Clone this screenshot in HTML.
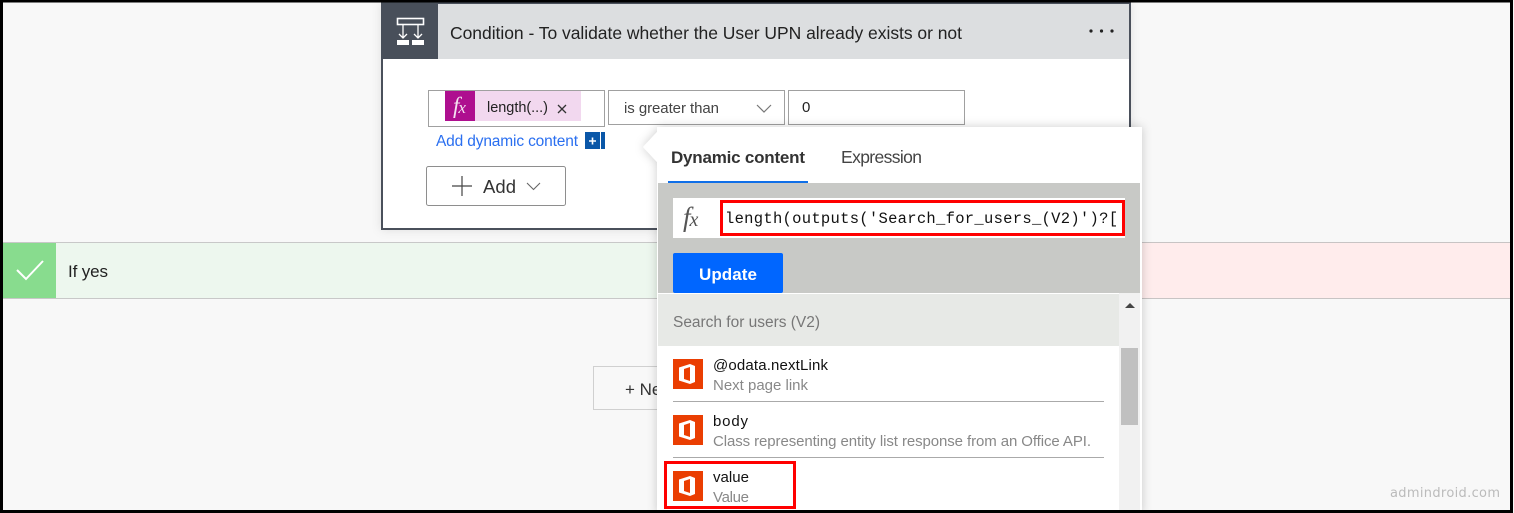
<!DOCTYPE html>
<html><head><meta charset="utf-8"><style>
html,body{margin:0;padding:0;background:#f8f8f8;width:1514px;height:513px;overflow:hidden}
svg{display:block}
text{font-family:"Liberation Sans",sans-serif;white-space:pre}
</style></head><body>
<svg width="1514" height="513" viewBox="0 0 1514 513" xmlns="http://www.w3.org/2000/svg">
<defs>
<filter id="s" x="-10%" y="-10%" width="120%" height="120%"><feDropShadow dx="0" dy="0" stdDeviation="5" flood-color="#000" flood-opacity=".2"/></filter>
<filter id="c" x="-5%" y="-10%" width="110%" height="120%"><feDropShadow dx="0" dy="0" stdDeviation="5" flood-color="#000" flood-opacity=".1"/></filter>
<symbol id="o" viewBox="0 0 30 30" width="30" height="30"><rect width="30" height="30" fill="#ea3e02"/><path fill="#fff" fill-rule="evenodd" d="M17 5L22 7V23L17 25L6 21.500V8.500ZM17 8L11 10V20L17 22Z"/></symbol>
</defs>
<rect width="1514" height="513" fill="#f8f8f8"/>

<!-- branch bars -->
<rect x="3" y="242" width="660" height="56" fill="#edf7ee"/>
<rect x="1138" y="242" width="373" height="56" fill="#ffecec"/>
<rect x="3" y="242" width="660" height="1" fill="#c8c8c8"/><rect x="3" y="298" width="660" height="1" fill="#c8c8c8"/>
<rect x="1138" y="242" width="373" height="1" fill="#c8c4c4"/><rect x="1138" y="298" width="373" height="1" fill="#c8c4c4"/>
<rect x="3" y="243" width="53" height="55" fill="#88dc8e"/>
<path d="M17 270L26 279L43 261" fill="none" stroke="#fff" stroke-width="2"/>
<text x="68" y="277" font-size="17" fill="#222" textLength="40" lengthAdjust="spacing">If yes</text>

<!-- new step -->
<rect x="593.500" y="366.500" width="80" height="43" fill="#f8f8f8" stroke="#d0d0d0"/>
<text x="625" y="395" font-size="17" fill="#333">+ New</text>

<!-- condition card -->
<g filter="url(#c)"><rect x="381" y="2" width="750" height="228" fill="#fff"/></g>
<rect x="382" y="3" width="748" height="226" fill="#fff" stroke="#4a505b" stroke-width="2"/>
<rect x="383" y="4" width="746" height="55" fill="#dcdee0"/>
<rect x="381" y="2" width="57" height="57" fill="#484f5a"/>
<rect x="397.500" y="18.500" width="26" height="6" fill="none" stroke="#fff" stroke-width="1.600"/>
<path d="M403 25V38M399 34L403 38L407 34M418 25V38M414 34L418 38L422 34" fill="none" stroke="#fff" stroke-width="1.300"/>
<rect x="397" y="40" width="12" height="5" fill="#fff"/><rect x="412" y="40" width="12" height="5" fill="#fff"/>
<text x="450" y="39" font-size="17.500" fill="#222" textLength="512" lengthAdjust="spacing">Condition - To validate whether the User UPN already exists or not</text>
<circle cx="1091" cy="31" r="1.600" fill="#222"/><circle cx="1101.500" cy="31" r="1.600" fill="#222"/><circle cx="1112" cy="31" r="1.600" fill="#222"/>

<rect x="428.500" y="90.500" width="176" height="36" fill="#fff" stroke="#a0a0a0"/>
<rect x="445" y="91" width="30" height="30" fill="#ae0f8f"/>
<rect x="475" y="91" width="106" height="30" fill="#f2d8ef"/>
<text x="453" y="113" font-size="23" fill="#f4e0f0" font-style="italic" style="font-family:'Liberation Serif',serif">f<tspan font-size="17" dx="-1">x</tspan></text>
<text x="487" y="112" font-size="14.500" fill="#222" textLength="61" lengthAdjust="spacing">length(...)</text>
<path d="M558 105L566 113M566 105L558 113" stroke="#333" stroke-width="1.300"/>

<rect x="608.500" y="90.500" width="176" height="34" fill="#fff" stroke="#a0a0a0"/>
<text x="624" y="113" font-size="15" fill="#444" textLength="95" lengthAdjust="spacing">is greater than</text>
<path d="M757 105L764 112L771 105" fill="none" stroke="#777" stroke-width="1.200"/>
<rect x="788.500" y="90.500" width="176" height="34" fill="#fff" stroke="#a0a0a0"/>
<text x="802" y="112" font-size="15" fill="#222">0</text>

<text x="436" y="146" font-size="15.500" fill="#2a6ff0" textLength="142" lengthAdjust="spacing">Add dynamic content</text>
<rect x="585" y="132" width="15" height="17" fill="#0a57a8"/><rect x="601" y="132" width="4" height="17" fill="#0a57a8"/>
<path d="M589 141H596M592.500 137.500V144.500" stroke="#fff" stroke-width="1.600"/>

<rect x="426.500" y="166.500" width="139" height="39" rx="2" fill="#fff" stroke="#8e8e8e"/>
<path d="M452 186H472M462 176V196" stroke="#444" stroke-width="1.200"/>
<text x="483" y="193" font-size="18.500" fill="#333" textLength="33" lengthAdjust="spacing">Add</text>
<path d="M527 183L533.500 189.500L540 183" fill="none" stroke="#666" stroke-width="1.100"/>

<!-- popup -->
<g filter="url(#s)"><path d="M657 127H1142V513H657V162L643 147L657 132Z" fill="#fff"/></g>
<text x="671" y="163" font-size="17" font-weight="bold" fill="#333" textLength="134" lengthAdjust="spacing">Dynamic content</text>
<text x="841" y="163" font-size="17.500" fill="#444" textLength="81" lengthAdjust="spacing">Expression</text>
<rect x="668" y="181" width="140" height="2" fill="#0f6fe8"/>
<rect x="658" y="183" width="482" height="110" fill="#c8c9c6"/>
<rect x="673" y="198" width="452" height="40" fill="#fff"/>
<text x="683" y="226" font-size="27" font-style="italic" fill="#555" style="font-family:'Liberation Serif',serif">f<tspan font-size="20" dx="-1">x</tspan></text>
<rect x="721.500" y="201.500" width="402" height="33" fill="#fff" stroke="#f00" stroke-width="3"/>
<text x="725" y="223" font-size="15.500" fill="#111" style="font-family:'Liberation Mono',monospace" textLength="393" lengthAdjust="spacing">length(outputs('Search_for_users_(V2)')?[</text>
<rect x="673" y="253" width="110" height="40" rx="2" fill="#0066ff"/>
<text x="699" y="280" font-size="17" font-weight="bold" fill="#fff" textLength="58" lengthAdjust="spacing">Update</text>

<rect x="658" y="294" width="461" height="52" fill="#e7e9e6"/>
<text x="673" y="327" font-size="15.500" fill="#777" textLength="147" lengthAdjust="spacing">Search for users (V2)</text>
<rect x="1119" y="293" width="21" height="220" fill="#f1f1f1"/>
<path d="M1125 308L1130 303L1135 308Z" fill="#444"/>
<rect x="1121" y="348" width="17" height="77" fill="#c0c0c0"/>

<use href="#o" x="673" y="359"/><use href="#o" x="673" y="415"/><use href="#o" x="673" y="471"/>
<text x="713" y="370" font-size="15" fill="#111" textLength="115" lengthAdjust="spacing">@odata.nextLink</text>
<text x="713" y="390" font-size="15" fill="#888" textLength="95" lengthAdjust="spacing">Next page link</text>
<rect x="673" y="401" width="431" height="1" fill="#aaa"/>
<text x="713" y="426" font-size="15" fill="#111" textLength="35" lengthAdjust="spacing">body</text>
<text x="713" y="446" font-size="15" fill="#888" textLength="378" lengthAdjust="spacing">Class representing entity list response from an Office API.</text>
<rect x="673" y="457" width="431" height="1" fill="#aaa"/>
<text x="713" y="482" font-size="15" fill="#111" textLength="36" lengthAdjust="spacing">value</text>
<text x="713" y="502" font-size="15" fill="#888" textLength="36" lengthAdjust="spacing">Value</text>
<rect x="665.500" y="462.500" width="129" height="45" fill="none" stroke="#f00" stroke-width="3"/>

<!-- watermark -->
<text x="1390" y="497" font-size="13" fill="#bbb" style="font-family:'DejaVu Sans',sans-serif" textLength="110" lengthAdjust="spacing">admindroid.com</text>

<!-- outer frame -->
<rect x="1.500" y="1" width="1510" height="510.500" fill="none" stroke="#000" stroke-width="3"/>
</svg>
</body></html>
